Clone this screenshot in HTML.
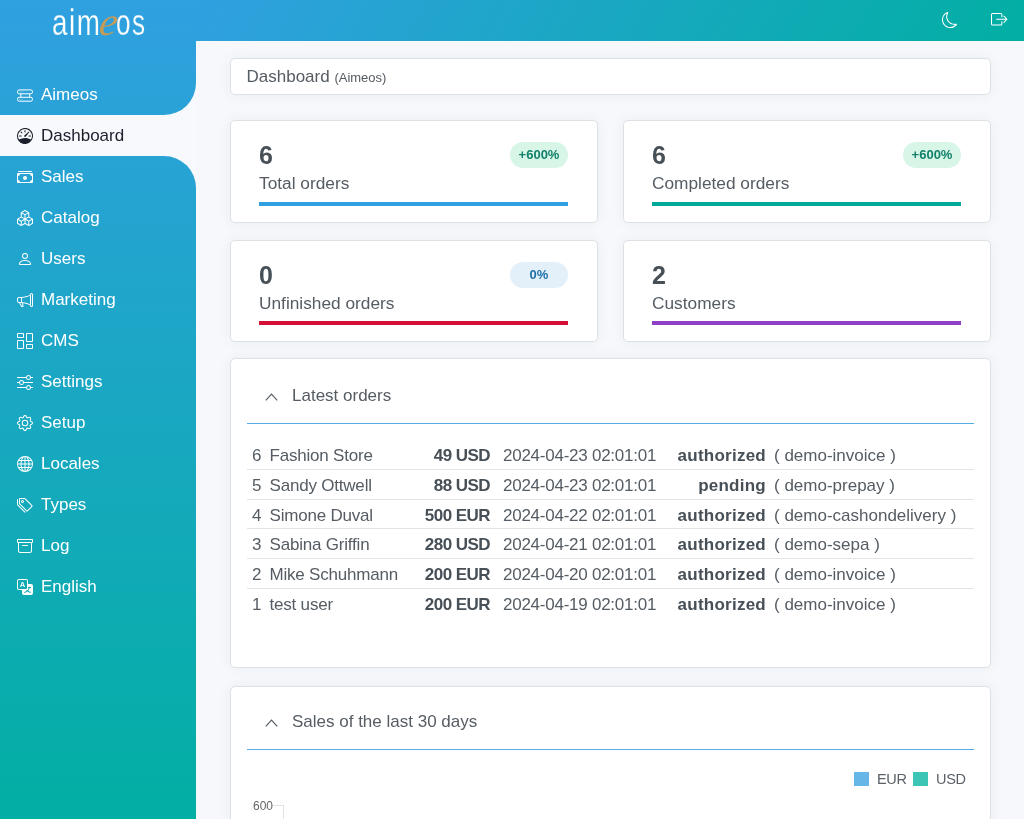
<!DOCTYPE html>
<html>
<head>
<meta charset="utf-8">
<style>
*{box-sizing:border-box;}
html,body{margin:0;padding:0;}
body{width:1024px;height:819px;overflow:hidden;position:relative;background:#f6f8fb;font-family:"Liberation Sans",sans-serif;color:#555c63;}
.hdr{position:absolute;left:196px;top:0;width:828px;height:41px;background:linear-gradient(120deg,#30a0e0,#02afa3);}
.logo span{position:absolute;height:41px;line-height:41px;font-size:37.4px;color:#fff;white-space:nowrap;transform-origin:0 0;}
.logo .l1{left:51.6px;top:1.6px;transform:scaleX(0.744);letter-spacing:2px;-webkit-text-stroke:0.25px #30a0e0;}
.logo .l3{left:116.3px;top:1.6px;transform:scaleX(0.70);letter-spacing:2px;-webkit-text-stroke:0.25px #30a0e0;}
.logo .le{left:97.8px;top:1.2px;font-family:"Liberation Serif",serif;font-style:italic;color:#c49c55;font-size:40px;transform:skewX(-10deg);transform-origin:0 33px;}
.side{position:absolute;left:0;top:0;width:196px;height:819px;background:#f7f9fc;}
.g1,.g2{position:absolute;left:0;width:196px;background-image:linear-gradient(to bottom,#30a0e0,#02afa3);background-size:196px 819px;background-repeat:no-repeat;}
.g1{top:0;height:114.5px;border-bottom-right-radius:32px;}
.g2{top:155.5px;height:663.5px;border-top-right-radius:32px;background-position:0 -155.5px;}
.nav{position:absolute;left:0;top:73.5px;width:196px;}
.nav div{height:41px;line-height:41px;font-size:17px;color:#fff;padding-left:41px;position:relative;white-space:nowrap;}
.nav div.act{color:#1b1e2b;}
.nav svg{position:absolute;left:16.7px;top:13px;width:16px;height:16px;}
.card{position:absolute;background:#fff;border:1px solid #dde0e4;border-radius:5px;box-shadow:0 0 14px rgba(30,60,110,0.055);}
.num{position:absolute;left:28px;font-size:25px;font-weight:700;color:#474f57;}
.lbl{position:absolute;left:28px;font-size:17.3px;color:#555c63;}
.bar{position:absolute;left:28px;width:309px;height:4px;}
.badge{position:absolute;height:26px;line-height:26px;border-radius:13px;font-size:13px;font-weight:700;text-align:center;}
.chev{position:absolute;width:13px;height:8px;}
.chev svg{display:block;}
.ctitle{position:absolute;font-size:17px;color:#555c63;white-space:nowrap;}
.cline{position:absolute;height:1px;background:#55ade4;}
.tbl{position:absolute;width:727px;}
.tr{position:relative;height:29.8px;border-bottom:1px solid #e2e5e8;font-size:17px;color:#555c63;white-space:nowrap;}
.tr.last{border-bottom:none;}
.tr span{position:absolute;top:6px;}
.c1{left:5px;}
.c2{left:22.5px;letter-spacing:-0.2px;}
.c3{right:484px;font-weight:700;color:#474f57;letter-spacing:-0.55px;}
.c4{left:256px;letter-spacing:-0.25px;}
.c5{right:208px;font-weight:700;color:#474f57;letter-spacing:0.25px;}
.c6{left:527px;}
.card,.side,.hdr{will-change:transform;}
</style>
</head>
<body>
<div class="hdr">
  <svg style="position:absolute;left:746px;top:12px;width:16px;height:16px" viewBox="0 0 16 16" fill="#fff"><path d="M6 .278a.77.77 0 0 1 .08.858 7.2 7.2 0 0 0-.878 3.460c0 4.021 3.278 7.277 7.318 7.277q.792-.001 1.533-.160a.79.79 0 0 1 .810.316.73.73 0 0 1-.031.893A8.35 8.35 0 0 1 8.344 16C3.734 16 0 12.286 0 7.710 0 4.266 2.114 1.312 5.124.060A.75.75 0 0 1 6 .278M4.858 1.311A7.270 7.270 0 0 0 1.025 7.710c0 4.020 3.279 7.276 7.319 7.276a7.320 7.320 0 0 0 5.205-2.162q-.506.063-1.029.063c-4.610 0-8.343-3.714-8.343-8.290 0-1.167.242-2.278.681-3.286"/></svg>
  <svg style="position:absolute;left:795px;top:11px;width:16.5px;height:16.5px" viewBox="0 0 16 16" fill="#fff"><path fill-rule="evenodd" d="M10 12.5a.5.5 0 0 1-.5.5h-8a.5.5 0 0 1-.5-.5v-9a.5.5 0 0 1 .5-.5h8a.5.5 0 0 1 .5.5v2a.5.5 0 0 0 1 0v-2A1.5 1.5 0 0 0 9.5 2h-8A1.5 1.5 0 0 0 0 3.5v9A1.5 1.5 0 0 0 1.5 14h8a1.5 1.5 0 0 0 1.5-1.5v-2a.5.5 0 0 0-1 0z"/><path fill-rule="evenodd" d="M15.854 8.354a.5.5 0 0 0 0-.708l-3-3a.5.5 0 0 0-.708.708L14.293 7.5H5.5a.5.5 0 0 0 0 1h8.793l-2.147 2.146a.5.5 0 0 0 .708.708z"/></svg>
</div>
<div class="side">
  <div class="g1"></div>
  <div class="g2"></div>
  <div class="logo"><span class="l1">aim</span><span class="le">e</span><span class="l3">os</span></div>
  <div class="nav">
    <div><svg viewBox="0 0 16 16" fill="none" stroke="currentColor" stroke-width="1"><rect x="0.5" y="2.9" width="15" height="3.9" rx="1.7"/><rect x="0.5" y="10.3" width="15" height="3.9" rx="1.7"/><path d="M3.8 6.8V10.3M12.7 6.8V10.3"/><circle cx="2.9" cy="4.85" r="0.45" fill="currentColor" stroke="none"/><circle cx="5" cy="4.85" r="0.45" fill="currentColor" stroke="none"/><circle cx="2.9" cy="12.25" r="0.45" fill="currentColor" stroke="none"/><circle cx="5" cy="12.25" r="0.45" fill="currentColor" stroke="none"/></svg>Aimeos</div>
    <div class="act"><svg viewBox="0 0 16 16" fill="currentColor"><path d="M8 2a.5.5 0 0 1 .5.5V4a.5.5 0 0 1-1 0V2.5A.5.5 0 0 1 8 2M3.732 3.732a.5.5 0 0 1 .707 0l.915.914a.5.5 0 1 1-.708.708l-.914-.915a.5.5 0 0 1 0-.707M2 8a.5.5 0 0 1 .5-.5h1.586a.5.5 0 0 1 0 1H2.5A.5.5 0 0 1 2 8m9.5 0a.5.5 0 0 1 .5-.5h1.5a.5.5 0 0 1 0 1H12a.5.5 0 0 1-.5-.5m.754-4.246a.39.39 0 0 0-.527-.02L7.547 7.31A.91.91 0 1 0 8.85 8.569l3.434-4.297a.39.39 0 0 0-.029-.518z"/><path fill-rule="evenodd" d="M6.664 15.889A8 8 0 1 1 9.336.11a8 8 0 0 1-2.672 15.78zm-4.665-4.283A11.95 11.95 0 0 1 8 10c2.186 0 4.236.585 6.001 1.606a7 7 0 1 0-12.002 0"/></svg>Dashboard</div>
    <div><svg viewBox="0 0 16 16" fill="currentColor"><path d="M1 3a1 1 0 0 1 1-1h12a1 1 0 0 1 1 1zm7 8a2 2 0 1 0 0-4 2 2 0 0 0 0 4"/><path d="M0 5a1 1 0 0 1 1-1h14a1 1 0 0 1 1 1v8a1 1 0 0 1-1 1H1a1 1 0 0 1-1-1zm3 0a2 2 0 0 1-2 2v4a2 2 0 0 1 2 2h10a2 2 0 0 1 2-2V7a2 2 0 0 1-2-2z"/></svg>Sales</div>
    <div><svg viewBox="0 0 16 16" fill="currentColor"><path d="M7.752.066a.5.5 0 0 1 .496 0l3.75 2.143a.5.5 0 0 1 .252.434v3.995l3.498 2A.5.5 0 0 1 16 9.07v4.286a.5.5 0 0 1-.252.434l-3.75 2.143a.5.5 0 0 1-.496 0l-3.502-2-3.502 2.001a.5.5 0 0 1-.496 0l-3.75-2.143A.5.5 0 0 1 0 13.357V9.071a.5.5 0 0 1 .252-.434L3.75 6.638V2.643a.5.5 0 0 1 .252-.434zM4.25 7.504 1.508 9.071l2.742 1.567 2.742-1.567zM7.5 9.933l-2.75 1.571v3.134l2.75-1.571zm1 3.134 2.75 1.571v-3.134L8.5 9.933zm.508-3.996 2.742 1.567 2.742-1.567-2.742-1.567zm2.242-2.433V3.504L8.5 5.076V8.21zM7.5 8.21V5.076L4.75 3.504v3.134zM5.258 2.643 8 4.21l2.742-1.567L8 1.076zM15 9.933l-2.75 1.571v3.134L15 13.067zM3.75 14.638v-3.134L1 9.933v3.134z"/></svg>Catalog</div>
    <div><svg viewBox="0 0 16 16" fill="currentColor"><path d="M8 8a3 3 0 1 0 0-6 3 3 0 0 0 0 6m2-3a2 2 0 1 1-4 0 2 2 0 0 1 4 0m4 8c0 1-1 1-1 1H3s-1 0-1-1 1-4 6-4 6 3 6 4m-1-.004c-.001-.246-.154-.986-.832-1.664C11.516 10.68 10.289 10 8 10s-3.516.68-4.168 1.332c-.678.678-.83 1.418-.832 1.664z"/></svg>Users</div>
    <div><svg viewBox="0 0 16 16" fill="currentColor"><path d="M13 2.5a1.5 1.5 0 0 1 3 0v11a1.5 1.5 0 0 1-3 0v-.214c-2.162-1.241-4.49-1.843-6.912-2.083l.405 2.712A1 1 0 0 1 5.51 15.1h-.548a1 1 0 0 1-.916-.599l-1.85-3.49-.202-.003A2.014 2.014 0 0 1 0 9V7a2.020 2.020 0 0 1 1.992-2.013 75 75 0 0 0 2.483-.075c3.043-.154 6.148-.849 8.525-2.199zm1 0v11a.5.5 0 0 0 1 0v-11a.5.5 0 0 0-1 0m-1 1.350c-2.344 1.205-5.209 1.842-8 2.033v4.233q.27.015.537.036c2.568.189 5.093.744 7.463 1.993zm-9 6.215v-4.130a95 95 0 0 1-1.992.052A1.020 1.020 0 0 0 1 7v2c0 .55.448 1.002 1.006 1.009A61 61 0 0 1 4 10.065m-.657.975 1.609 3.037.01.024h.548l-.002-.014-.443-2.966a68 68 0 0 0-1.722-.082z"/></svg>Marketing</div>
    <div><svg viewBox="0 0 16 16" fill="currentColor"><path d="M6 1v3H1V1zM1 0a1 1 0 0 0-1 1v3a1 1 0 0 0 1 1h5a1 1 0 0 0 1-1V1a1 1 0 0 0-1-1zm14 12v3h-5v-3zm-5-1a1 1 0 0 0-1 1v3a1 1 0 0 0 1 1h5a1 1 0 0 0 1-1v-3a1 1 0 0 0-1-1zM6 8v7H1V8zM1 7a1 1 0 0 0-1 1v7a1 1 0 0 0 1 1h5a1 1 0 0 0 1-1V8a1 1 0 0 0-1-1zm14-6v7h-5V1zm-5-1a1 1 0 0 0-1 1v7a1 1 0 0 0 1 1h5a1 1 0 0 0 1-1V1a1 1 0 0 0-1-1z"/></svg>CMS</div>
    <div><svg viewBox="0 0 16 16" fill="currentColor"><path fill-rule="evenodd" d="M11.5 2a1.5 1.5 0 1 0 0 3 1.5 1.5 0 0 0 0-3M9.05 3a2.5 2.5 0 0 1 4.9 0H16v1h-2.05a2.5 2.5 0 0 1-4.9 0H0V3zM4.5 7a1.5 1.5 0 1 0 0 3 1.5 1.5 0 0 0 0-3M2.05 8a2.5 2.5 0 0 1 4.9 0H16v1H6.95a2.5 2.5 0 0 1-4.9 0H0V8zm9.45 4a1.5 1.5 0 1 0 0 3 1.5 1.5 0 0 0 0-3m-2.45 1a2.5 2.5 0 0 1 4.9 0H16v1h-2.05a2.5 2.5 0 0 1-4.9 0H0v-1z"/></svg>Settings</div>
    <div><svg viewBox="0 0 16 16" fill="currentColor"><path d="M8 4.754a3.246 3.246 0 1 0 0 6.492 3.246 3.246 0 0 0 0-6.492M5.754 8a2.246 2.246 0 1 1 4.492 0 2.246 2.246 0 0 1-4.492 0"/><path d="M9.796 1.343c-.527-1.790-3.065-1.790-3.592 0l-.094.319a.873.873 0 0 1-1.255.520l-.292-.160c-1.640-.892-3.433.902-2.540 2.541l.159.292a.873.873 0 0 1-.520 1.255l-.319.094c-1.790.527-1.790 3.065 0 3.592l.319.094a.873.873 0 0 1 .520 1.255l-.160.292c-.892 1.640.901 3.434 2.541 2.540l.292-.159a.873.873 0 0 1 1.255.520l.094.319c.527 1.790 3.065 1.790 3.592 0l.094-.319a.873.873 0 0 1 1.255-.520l.292.160c1.640.893 3.434-.902 2.540-2.541l-.159-.292a.873.873 0 0 1 .520-1.255l.319-.094c1.790-.527 1.790-3.065 0-3.592l-.319-.094a.873.873 0 0 1-.520-1.255l.160-.292c.893-1.640-.902-3.433-2.541-2.540l-.292.159a.873.873 0 0 1-1.255-.520zm-2.633.283c.246-.835 1.428-.835 1.674 0l.094.319a1.873 1.873 0 0 0 2.693 1.115l.291-.160c.764-.415 1.600.420 1.184 1.185l-.159.292a1.873 1.873 0 0 0 1.116 2.692l.318.094c.835.246.835 1.428 0 1.674l-.319.094a1.873 1.873 0 0 0-1.115 2.693l.160.291c.415.764-.420 1.600-1.185 1.184l-.291-.159a1.873 1.873 0 0 0-2.693 1.116l-.094.318c-.246.835-1.428.835-1.674 0l-.094-.319a1.873 1.873 0 0 0-2.692-1.115l-.292.160c-.764.415-1.600-.420-1.184-1.185l.159-.291A1.873 1.873 0 0 0 1.945 8.930l-.319-.094c-.835-.246-.835-1.428 0-1.674l.319-.094A1.873 1.873 0 0 0 3.060 4.377l-.160-.292c-.415-.764.420-1.600 1.185-1.184l.292.159a1.873 1.873 0 0 0 2.692-1.115z"/></svg>Setup</div>
    <div><svg viewBox="0 0 16 16" fill="currentColor"><path d="M0 8a8 8 0 1 1 16 0A8 8 0 0 1 0 8m7.5-6.923c-.67.204-1.335.82-1.887 1.855A8 8 0 0 0 5.145 4H7.5zM4.09 4a9.3 9.3 0 0 1 .64-1.539 7 7 0 0 1 .597-.933A7.030 7.030 0 0 0 2.255 4zm-.582 3.5c.03-.877.138-1.718.312-2.5H1.674a7 7 0 0 0-.656 2.5zM4.847 5a12.5 12.5 0 0 0-.338 2.5H7.5V5zM8.5 5v2.5h2.99a12.5 12.5 0 0 0-.337-2.5zM4.51 8.5a12.5 12.5 0 0 0 .337 2.5H7.5V8.5zm3.99 0V11h2.653c.187-.765.306-1.608.338-2.5zM5.145 12q.208.58.468 1.068c.552 1.035 1.218 1.65 1.887 1.855V12zm.182 2.472a7 7 0 0 1-.597-.933A9.3 9.3 0 0 1 4.09 12H2.255a7 7 0 0 0 3.072 2.472M3.820 11a13.7 13.7 0 0 1-.312-2.5h-2.49c.062.89.291 1.733.656 2.5zm6.853 3.472A7 7 0 0 0 13.745 12H11.91a9.3 9.3 0 0 1-.64 1.539 7 7 0 0 1-.597.933M8.5 12v2.923c.67-.204 1.335-.82 1.887-1.855q.26-.487.468-1.068zm3.68-1h2.146c.365-.767.594-1.61.656-2.5h-2.49a13.7 13.7 0 0 1-.312 2.5m2.802-3.5a7 7 0 0 0-.656-2.5H12.18c.174.782.282 1.623.312 2.5zM11.27 2.461c.247.464.462.98.64 1.539h1.835a7 7 0 0 0-3.072-2.472c.218.284.418.598.597.933M10.855 4a8 8 0 0 0-.468-1.068C9.835 1.897 9.17 1.282 8.5 1.077V4z"/></svg>Locales</div>
    <div><svg viewBox="0 0 16 16" fill="currentColor"><path d="M3 2v4.586l7 7L14.586 9l-7-7zM2 2a1 1 0 0 1 1-1h4.586a1 1 0 0 1 .707.293l7 7a1 1 0 0 1 0 1.414l-4.586 4.586a1 1 0 0 1-1.414 0l-7-7A1 1 0 0 1 2 6.586z"/><path d="M5.5 5a.5.5 0 1 1 0-1 .5.5 0 0 1 0 1m0 1a1.5 1.5 0 1 0 0-3 1.5 1.5 0 0 0 0 3M1 7.086a1 1 0 0 0 .293.707L8.75 15.25l-.043.043a1 1 0 0 1-1.414 0l-7-7A1 1 0 0 1 0 7.586V3a1 1 0 0 1 1-1z"/></svg>Types</div>
    <div><svg viewBox="0 0 16 16" fill="currentColor"><path d="M0 2a1 1 0 0 1 1-1h14a1 1 0 0 1 1 1v2a1 1 0 0 1-1 1v7.5a2.5 2.5 0 0 1-2.5 2.5h-9A2.5 2.5 0 0 1 1 12.5V5a1 1 0 0 1-1-1zm2 3v7.5A1.5 1.5 0 0 0 3.5 14h9a1.5 1.5 0 0 0 1.5-1.5V5zm13-3H1v2h14zM5 7.5a.5.5 0 0 1 .5-.5h5a.5.5 0 0 1 0 1h-5a.5.5 0 0 1-.5-.5"/></svg>Log</div>
    <div><svg viewBox="0 0 16 16" fill="currentColor"><path d="M4.545 6.714 4.11 8H3l1.862-5h1.284L8 8H6.833l-.435-1.286zm1.634-.736L5.5 3.956h-.049l-.679 2.022z"/><path d="M0 2a2 2 0 0 1 2-2h7a2 2 0 0 1 2 2v3h3a2 2 0 0 1 2 2v7a2 2 0 0 1-2 2H7a2 2 0 0 1-2-2v-3H2a2 2 0 0 1-2-2zm2-1a1 1 0 0 0-1 1v7a1 1 0 0 0 1 1h7a1 1 0 0 0 1-1V2a1 1 0 0 0-1-1zm7.138 9.995q.289.451.63.846c-.748.575-1.673 1.001-2.768 1.292.178.217.451.635.555.867 1.125-.359 2.08-.844 2.886-1.494.777.665 1.739 1.165 2.93 1.472.133-.254.414-.673.629-.89-1.125-.253-2.057-.694-2.82-1.284.681-.747 1.222-1.651 1.621-2.757H14V8h-3v1.047h.765c-.318.844-.74 1.546-1.272 2.13a6 6 0 0 1-.415-.492 2 2 0 0 1-.94.31"/></svg>English</div>
  </div>
</div>

<div class="card" style="left:230px;top:58px;width:761px;height:37px;">
  <span style="position:absolute;left:15.5px;top:8px;font-size:17px;">Dashboard <span style="font-size:13px">(Aimeos)</span></span>
</div>

<div class="card" style="left:230px;top:120px;width:368px;height:103px;">
  <div class="num" style="top:20px">6</div>
  <div class="lbl" style="top:52.3px">Total orders</div>
  <div class="badge" style="left:279px;top:21px;width:58px;background:#d8f6e7;color:#12806b">+600%</div>
  <div class="bar" style="top:81px;background:#30a0e0"></div>
</div>
<div class="card" style="left:623px;top:120px;width:368px;height:103px;">
  <div class="num" style="top:20px">6</div>
  <div class="lbl" style="top:52.3px">Completed orders</div>
  <div class="badge" style="left:279px;top:21px;width:58px;background:#d8f6e7;color:#12806b">+600%</div>
  <div class="bar" style="top:81px;background:#00a89a"></div>
</div>
<div class="card" style="left:230px;top:240px;width:368px;height:102px;">
  <div class="num" style="top:20px">0</div>
  <div class="lbl" style="top:52.3px">Unfinished orders</div>
  <div class="badge" style="left:279px;top:21px;width:58px;background:#e3f0fa;color:#1f6fa8">0%</div>
  <div class="bar" style="top:80.3px;background:#d40f37"></div>
</div>
<div class="card" style="left:623px;top:240px;width:368px;height:102px;">
  <div class="num" style="top:20px">2</div>
  <div class="lbl" style="top:52.3px">Customers</div>
  <div class="bar" style="top:80.3px;background:#9040c8"></div>
</div>


<div class="card" style="left:230px;top:358px;width:761px;height:310px;">
  <div class="chev" style="left:34.2px;top:34.3px"><svg width="13" height="8" viewBox="0 0 13 8"><path d="M0.8 7.3 L6.5 1.2 L12.2 7.3" fill="none" stroke="#535a62" stroke-width="1.15"/></svg></div>
  <div class="ctitle" style="left:61px;top:26.5px">Latest orders</div>
  <div class="cline" style="left:16px;top:64px;width:727px"></div>
  <div class="tbl" style="left:16px;top:81px;">
    <div class="tr"><span class="c1">6</span><span class="c2">Fashion Store</span><span class="c3">49 USD</span><span class="c4">2024-04-23 02:01:01</span><span class="c5">authorized</span><span class="c6">( demo-invoice )</span></div>
    <div class="tr"><span class="c1">5</span><span class="c2">Sandy Ottwell</span><span class="c3">88 USD</span><span class="c4">2024-04-23 02:01:01</span><span class="c5">pending</span><span class="c6">( demo-prepay )</span></div>
    <div class="tr"><span class="c1">4</span><span class="c2">Simone Duval</span><span class="c3">500 EUR</span><span class="c4">2024-04-22 02:01:01</span><span class="c5">authorized</span><span class="c6">( demo-cashondelivery )</span></div>
    <div class="tr"><span class="c1">3</span><span class="c2">Sabina Griffin</span><span class="c3">280 USD</span><span class="c4">2024-04-21 02:01:01</span><span class="c5">authorized</span><span class="c6">( demo-sepa )</span></div>
    <div class="tr"><span class="c1">2</span><span class="c2">Mike Schuhmann</span><span class="c3">200 EUR</span><span class="c4">2024-04-20 02:01:01</span><span class="c5">authorized</span><span class="c6">( demo-invoice )</span></div>
    <div class="tr last"><span class="c1">1</span><span class="c2">test user</span><span class="c3">200 EUR</span><span class="c4">2024-04-19 02:01:01</span><span class="c5">authorized</span><span class="c6">( demo-invoice )</span></div>
  </div>
</div>
<div class="card" style="left:230px;top:686px;width:761px;height:200px;">
  <div class="chev" style="left:34.2px;top:32.3px"><svg width="13" height="8" viewBox="0 0 13 8"><path d="M0.8 7.3 L6.5 1.2 L12.2 7.3" fill="none" stroke="#535a62" stroke-width="1.15"/></svg></div>
  <div class="ctitle" style="left:61px;top:24.8px">Sales of the last 30 days</div>
  <div class="cline" style="left:16px;top:62px;width:727px"></div>
  <div style="position:absolute;left:623px;top:85px;width:14.5px;height:14px;background:#67b6e8"></div>
  <div style="position:absolute;left:646px;top:84px;font-size:14.5px;color:#5a6168;letter-spacing:-0.3px">EUR</div>
  <div style="position:absolute;left:682px;top:85px;width:14.5px;height:14px;background:#3cc4b4"></div>
  <div style="position:absolute;left:705px;top:84px;font-size:14.5px;color:#5a6168;letter-spacing:-0.3px">USD</div>
  <div style="position:absolute;left:22px;top:112px;font-size:12px;color:#666">600</div>
  <div style="position:absolute;left:42px;top:118px;width:10px;height:1px;background:#e2e2e2"></div>
  <div style="position:absolute;left:52px;top:118px;width:1px;height:100px;background:#e2e2e2"></div>
</div>
</body>
</html>
